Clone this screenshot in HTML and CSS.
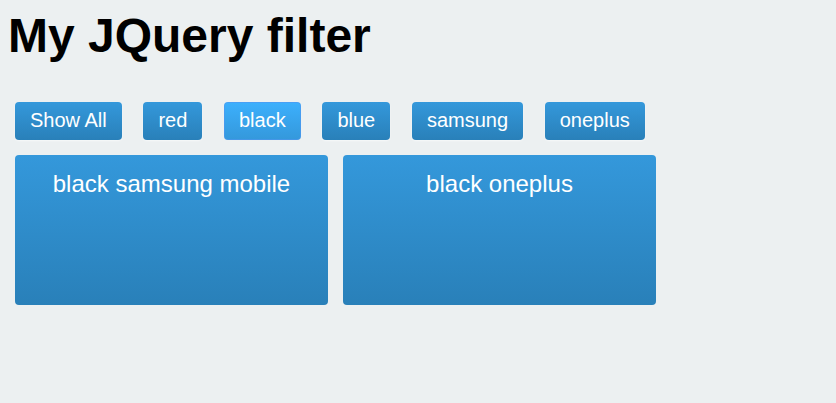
FILE: index.html
```html
<!DOCTYPE html>
<html lang="en">
<head>
  <meta charset="UTF-8">
  <meta name="viewport" content="width=device-width, initial-scale=1.0">
  <title>My JQuery filter</title>
  <link rel="stylesheet" href="styles.css">
</head>
<body>
  <h1 class="page-title">My JQuery filter</h1>

  <div class="filter-bar">
    <button class="filter-btn" data-filter="all">Show All</button>
    <button class="filter-btn" data-filter="red">red</button>
    <button class="filter-btn active" data-filter="black">black</button>
    <button class="filter-btn" data-filter="blue">blue</button>
    <button class="filter-btn" data-filter="samsung">samsung</button>
    <button class="filter-btn" data-filter="oneplus">oneplus</button>
  </div>

  <div class="product-list">
    <div class="product black samsung">black samsung mobile</div>
    <div class="product black oneplus">black oneplus</div>
  </div>
</body>
</html>
```

FILE: styles.css
```css
:root {
  --blue-top: #3498db;
  --blue-bottom: #2980b9;
  --blue-light: #3cb0fd;
  --page-bg: #ecf0f1;
}

body {
  margin: 8px;
  background-color: var(--page-bg);
  font-family: 'Liberation Sans', Arial, sans-serif;
  color: #000;
}

.page-title {
  font-size: 48px;
  font-weight: bold;
  margin: 0 0 39px;
}

.filter-bar {
  display: flex;
  gap: 21.7px;
  margin: 0 7px 15px;
}

.filter-btn {
  font-family: 'Liberation Sans', Arial, sans-serif;
  font-size: 20px;
  line-height: 23px;
  color: #fff;
  padding: 7px 15px 8px;
  border: none;
  border-radius: 4px;
  background-image: linear-gradient(to bottom, var(--blue-top), var(--blue-bottom));
  box-shadow: 0 1px 2px rgba(255, 255, 255, 0.6);
  cursor: pointer;
}

.filter-btn:hover,
.filter-btn.active {
  background-image: linear-gradient(to bottom, var(--blue-light), var(--blue-top));
  box-shadow: inset 0 0 0 1px rgba(80, 150, 240, 0.6);
}

.product-list {
  display: flex;
  gap: 15px;
  margin: 0 7px;
}

.product {
  width: 313px;
  height: 150px;
  box-sizing: border-box;
  padding-top: 15px;
  text-align: center;
  font-size: 24px;
  color: #fff;
  border-radius: 4px;
  background-image: linear-gradient(to bottom, var(--blue-top), var(--blue-bottom));
}
```
